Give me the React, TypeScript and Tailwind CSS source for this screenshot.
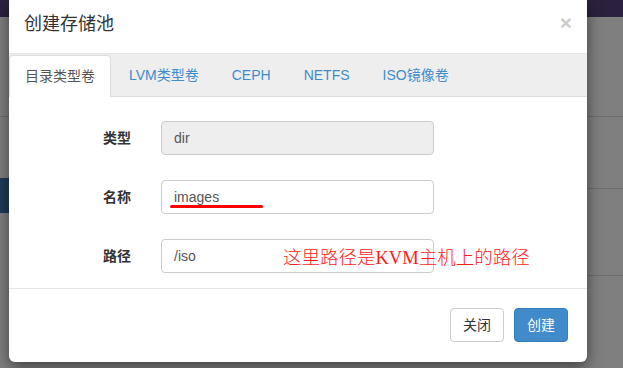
const tabs = ["目录类型卷", "LVM类型卷", "CEPH", "NETFS", "ISO镜像卷"];

const sans = "font-['Liberation_Sans','Noto_Sans_CJK_SC',sans-serif]";

function Backdrop() {
  return (
    <div className="flex h-full flex-col">
      <div className="h-[17px] bg-[#2b213f]" />
      <div className="flex flex-1">
        <div className="flex w-[150px] flex-col">
          <div className="h-[100px] border-b border-[#6f6f6f]" />
          <div className="mt-[61px] h-[35px] bg-[#1d3b58]" />
        </div>
        <div className="flex flex-1 flex-col">
          <div className="h-[100px] border-b border-[#6f6f6f]" />
          <div className="h-[72px] border-b border-[#6f6f6f]" />
          <div className="h-[87px] border-b border-[#6f6f6f]" />
        </div>
      </div>
    </div>
  );
}

function Row({ label, children }: { label: string; children: React.ReactNode }) {
  return (
    <div className="flex items-center">
      <label className="w-[122px] text-right text-[14px] font-bold text-[#333]">{label}</label>
      <div className="relative ml-[30px] w-[273px]">{children}</div>
    </div>
  );
}

export default function App() {
  return (
    <div className={`relative h-[368px] w-[623px] overflow-hidden bg-[#7f7f7f] ${sans}`}>
      <Backdrop />

      <div className="absolute left-[9px] top-0 w-[578px] rounded-b-[6px] bg-white shadow-[0_5px_15px_rgba(0,0,0,0.5)]">
        <div className="flex h-[54px] items-center justify-between border-b border-[#e5e5e5] px-[15px] pb-[5px]">
          <h4 className="text-[18px] leading-[26px] text-[#333]">创建存储池</h4>
          <span className="-mt-[4px] text-[21px] font-bold leading-none text-black opacity-20">×</span>
        </div>

        <div className="flex h-[43px] gap-[3px] border-b border-[#ddd] bg-[#eee] pt-[1px]">
          {tabs.map((t, i) => (
            <div
              key={t}
              className={
                i === 0
                  ? "-mb-px flex h-[42px] items-center rounded-t-[4px] border border-b-0 border-[#ddd] bg-white px-[15px] text-[14px] text-[#555]"
                  : "flex h-[41px] items-center px-[15px] text-[14px] text-[#428bca]"
              }
            >
              {t}
            </div>
          ))}
        </div>

        <div className="flex flex-col gap-[25px] pb-[15px] pt-[24px]">
          <Row label="类型">
            <div className="flex h-[34px] items-center rounded-[4px] border border-[#ccc] bg-[#eee] px-[12px] text-[14px] text-[#555]">
              dir
            </div>
          </Row>
          <Row label="名称">
            <div className="flex h-[34px] items-center rounded-[4px] border border-[#ccc] bg-white px-[12px] text-[14px] text-[#555]">
              images
            </div>
            <div className="absolute left-[9px] top-[25px] h-[3px] w-[93px] rounded-full bg-[#f00]" />
          </Row>
          <Row label="路径">
            <div className="flex h-[34px] items-center rounded-[4px] border border-[#ccc] bg-white px-[12px] text-[14px] text-[#555]">
              /iso
            </div>
            <span className="absolute left-[122px] top-[8px] whitespace-nowrap font-['Liberation_Serif','Noto_Sans_CJK_SC',serif] text-[18.5px] font-light leading-[22px] text-[#ff1a1a]">
              这里路径是KVM主机上的路径
            </span>
          </Row>
        </div>

        <div className="flex justify-end gap-[10px] border-t border-[#e5e5e5] pb-[20px] pr-[19px] pt-[19px]">
          <button className="h-[34px] w-[54px] rounded-[4px] border border-[#ccc] bg-white text-[14px] text-[#333]">
            关闭
          </button>
          <button className="h-[34px] w-[54px] rounded-[4px] border border-[#357ebd] bg-[#428bca] text-[14px] text-white">
            创建
          </button>
        </div>
      </div>
    </div>
  );
}
